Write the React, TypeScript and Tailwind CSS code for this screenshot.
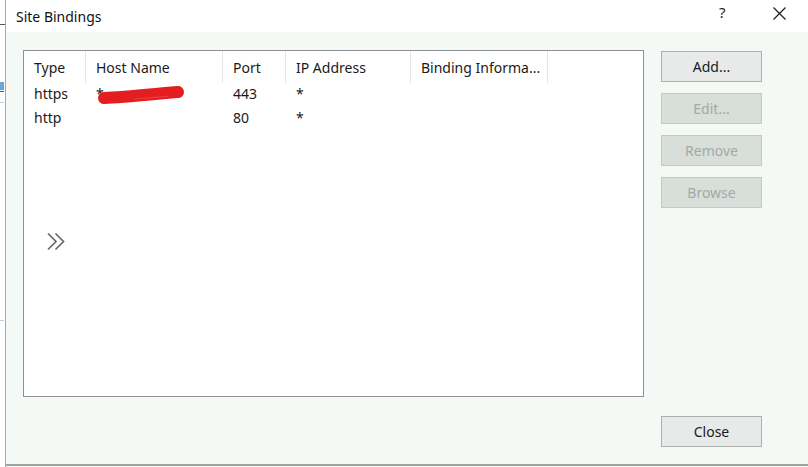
import React from "react";

const cols = [
  { label: "Type", w: 62 },
  { label: "Host Name", w: 137 },
  { label: "Port", w: 63 },
  { label: "IP Address", w: 125 },
  { label: "Binding Informa...", w: 137 },
];

const rows = [
  ["https", "*", "443", "*", ""],
  ["http", "", "80", "*", ""],
];

function Btn({ label, disabled }: { label: string; disabled?: boolean }) {
  return (
    <div
      className={
        disabled
          ? "h-[31px] w-[101px] flex items-center justify-center border border-[#c3c9c4] bg-[#d8ded9] text-[#a3aaa5]"
          : "h-[31px] w-[101px] flex items-center justify-center border border-[#adb1ae] bg-[#e7eae8] text-[#1a1a1a]"
      }
    >
      {label}
    </div>
  );
}

export default function App() {
  return (
    <div
      className="w-[808px] h-[467px] flex bg-white overflow-hidden text-[14px] text-[#1a1a1a]"
      style={{ fontFamily: '"Noto Sans", "Open Sans", sans-serif' }}
    >
      {/* background strip */}
      <div className="w-[5px] relative bg-white">
        <div className="absolute left-0 top-[24px] w-[5px] h-[1px] bg-[#555]" />
        <div className="absolute left-0 top-[82px] w-[4px] h-[8px] bg-[#6aa6d8]" />
        <div className="absolute left-0 top-[91px] w-[4px] h-[1px] bg-[#555a7a]" />
        <div className="absolute left-0 top-[102px] w-[4px] h-[1px] bg-[#b8cde8]" />
        <div className="absolute left-0 top-[320px] w-[4px] h-[1px] bg-[#b8cde8]" />
      </div>
      {/* window */}
      <div className="flex-1 flex flex-col border-l border-[#a7aaa8]">
        <div className="h-[32px] bg-white flex items-center relative">
          <span className="ml-[10px] text-[14px] text-[#111]">Site Bindings</span>
          <span className="absolute left-[713px] top-[1px] text-[15px] text-[#222]">?</span>
          <svg className="absolute left-[766px] top-[6px]" width="15" height="15" viewBox="0 0 15 15">
            <path d="M1.5 1.5 L13.5 13.5 M13.5 1.5 L1.5 13.5" stroke="#222" strokeWidth="1.3" fill="none" />
          </svg>
        </div>
        <div className="flex-1 bg-[#f5f9f6] border-b-2 border-[#9fa3a0] flex items-start pl-[17px] pt-[18px]">
          {/* list */}
          <div className="w-[621px] h-[347px] border border-[#8c9196] bg-white relative">
            <div className="flex h-[32px]">
              {cols.map((c, i) => (
                <div
                  key={i}
                  className="h-full flex items-center pl-[10px] border-r border-[#e3e6e4]"
                  style={{ width: c.w }}
                >
                  {c.label}
                </div>
              ))}
            </div>
            <div className="-mt-[2px]">
              {rows.map((r, ri) => (
                <div key={ri} className="flex h-[24px]">
                  {r.map((cell, ci) => (
                    <div key={ci} className="pl-[10px] flex items-center" style={{ width: cols[ci].w }}>
                      {cell}
                    </div>
                  ))}
                </div>
              ))}
            </div>
            {/* red scribble */}
            <svg className="absolute left-[70px] top-[32px]" width="94" height="24" viewBox="0 0 94 24">
              <path d="M10 15 C 30 14, 60 11, 84 9" stroke="#e41e20" strokeWidth="12" strokeLinecap="round" fill="none" />
              <path d="M40 16 C 55 15, 65 14, 75 13" stroke="#f05a5a" strokeWidth="0.6" fill="none" />
            </svg>
            {/* chevrons */}
            <svg className="absolute left-[22px] top-[181px]" width="22" height="20" viewBox="0 0 22 20">
              <path d="M2 1.5 L10 9.5 L2 17.5 M9.5 1.5 L17.5 9.5 L9.5 17.5" stroke="#686868" strokeWidth="1.7" fill="none" />
            </svg>
          </div>
          {/* buttons */}
          <div className="ml-[17px] h-[397px] flex flex-col justify-between pt-[1px]">
            <div className="flex flex-col gap-[11px]">
              <Btn label="Add..." />
              <Btn label="Edit..." disabled />
              <Btn label="Remove" disabled />
              <Btn label="Browse" disabled />
            </div>
            <Btn label="Close" />
          </div>
        </div>
        <div className="h-[1px] bg-[#f5f9f6]" />
      </div>
    </div>
  );
}
